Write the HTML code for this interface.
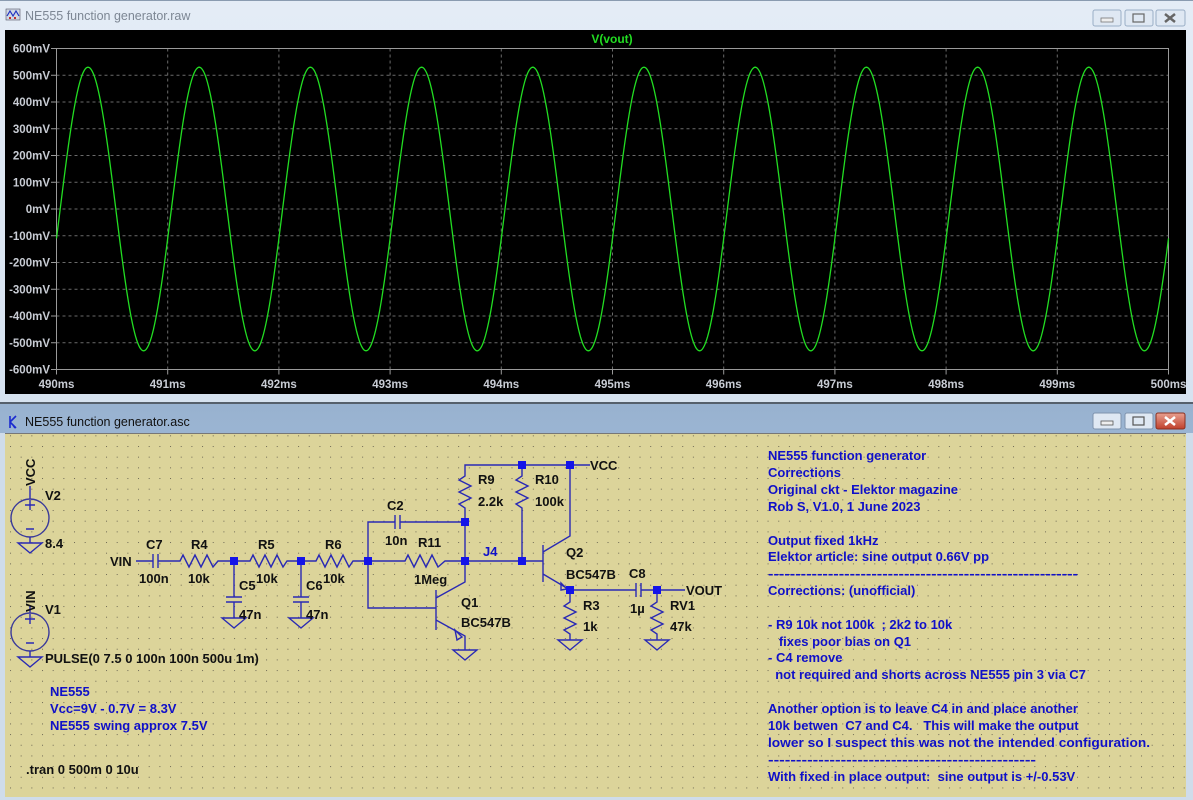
<!DOCTYPE html>
<html><head><meta charset="utf-8"><style>
html,body{margin:0;padding:0;background:#dfe8f3;width:1193px;height:800px;overflow:hidden}
svg{display:block}
text{white-space:pre}
.t{font-family:"Liberation Sans",sans-serif;font-weight:bold;font-size:13px}
.ax{font-family:"Liberation Sans",sans-serif;font-weight:bold;font-size:11.5px;fill:#c8ccd4}
.bl{fill:#1010c8}
.k{fill:#111}
</style></head><body>
<svg id="s" width="1193" height="800" xmlns="http://www.w3.org/2000/svg" xml:space="preserve">
<defs>
<linearGradient id="tb1" x1="0" y1="0" x2="0" y2="1"><stop offset="0" stop-color="#e4ecf6"/><stop offset="1" stop-color="#d6e2f0"/></linearGradient>
<linearGradient id="tb2" x1="0" y1="0" x2="0" y2="1"><stop offset="0" stop-color="#98b2d0"/><stop offset="1" stop-color="#bcd2ea"/></linearGradient>
<linearGradient id="cl" x1="0" y1="0" x2="0" y2="1"><stop offset="0" stop-color="#e8a090"/><stop offset="1" stop-color="#c0402c"/></linearGradient>
<pattern id="dots" x="10" y="446" width="10.67" height="10.67" patternUnits="userSpaceOnUse"><rect x="0" y="0" width="1" height="1" fill="#6f6a55"/></pattern>
</defs>
<rect x="0" y="0" width="1193" height="402" fill="url(#tb1)"/>
<rect x="0" y="0" width="1193" height="1" fill="#8a9bb0"/>
<g transform="translate(6,7)"><rect x="0" y="2" width="14" height="11" fill="#d0d8e4" stroke="#556" stroke-width="0.6"/><path d="M1 9 L4 4 L7 9 L10 4 L13 9" stroke="#2030c0" fill="none" stroke-width="1.2"/><rect x="3" y="10" width="2" height="2" fill="#c03030"/><rect x="8" y="10" width="2" height="2" fill="#c03030"/></g>
<text x="25" y="20" font-family="Liberation Sans,sans-serif" font-size="12.5" fill="#7d8794">NE555 function generator.raw</text>
<g fill="#dfe8f3" stroke="#9aaec6"><rect x="1093" y="10" width="28" height="16" rx="2"/><rect x="1125" y="10" width="28" height="16" rx="2"/><rect x="1156" y="10" width="29" height="16" rx="2"/></g>
<rect x="1101" y="18" width="12" height="4" fill="#eee" stroke="#777" stroke-width="0.8"/>
<rect x="1133" y="14" width="11" height="8" fill="none" stroke="#666" stroke-width="1.2"/>
<path d="M1165 14 L1175 22 M1175 14 L1165 22" stroke="#666" stroke-width="2.5"/>
<rect x="5" y="30" width="1181" height="364" fill="#000"/>
<g id="grid" stroke="#6a6a6a" stroke-dasharray="3,3" stroke-width="1"></g>
<rect x="56.5" y="48.5" width="1112" height="321" fill="none" stroke="#9a9a9a"/>
<path id="sine" fill="none" stroke="#22dd22" stroke-width="1.3"/>
<text x="612" y="43" text-anchor="middle" font-family="Liberation Sans,sans-serif" font-weight="bold" font-size="12" fill="#22dd22">V(vout)</text>
<g id="labels"></g>
<rect x="0" y="402" width="1193" height="2" fill="#55606c"/>
<rect x="0" y="404" width="1193" height="396" fill="url(#tb2)"/>
<rect x="0" y="433" width="1193" height="367" fill="#cfdcea"/>
<path d="M10 416 L10 428 M10 422 L16 416 M10 422 L16 428 M13 425 L15 428" stroke="#1a2ad0" stroke-width="1.6" fill="none"/>
<text x="25" y="426" font-family="Liberation Sans,sans-serif" font-size="12.5" fill="#111">NE555 function generator.asc</text>
<g fill="#dfe8f3" stroke="#7f93ad"><rect x="1093" y="413" width="28" height="16" rx="2"/><rect x="1125" y="413" width="28" height="16" rx="2"/></g>
<rect x="1156" y="413" width="29" height="16" rx="2" fill="url(#cl)" stroke="#8a3020"/>
<rect x="1101" y="421" width="12" height="4" fill="#eee" stroke="#555" stroke-width="0.8"/>
<rect x="1133" y="417" width="11" height="8" fill="none" stroke="#555" stroke-width="1.2"/>
<path d="M1165 417 L1175 425 M1175 417 L1165 425" stroke="#fff" stroke-width="2.5"/>
<rect x="5" y="433" width="1181" height="364" fill="#dcd49a"/>
<rect x="5" y="433" width="1181" height="364" fill="url(#dots)"/>
<rect x="5" y="433" width="1181" height="1" fill="#777"/>
<g stroke="#2a2ab4" stroke-width="1.4" fill="none">
<path d="M30 486 V499"/><circle cx="30" cy="518" r="19" stroke="#3a3a9a"/><path d="M25 505 H35 M30 500 V510 M26 529 H34"/><path d="M30 537 V543"/><path d="M18 543 H42 L30 553 Z"/>
<path d="M30 606 V613"/><circle cx="30" cy="632" r="19" stroke="#3a3a9a"/><path d="M25 619 H35 M30 614 V624 M26 643 H34"/><path d="M30 651 V657"/><path d="M18 657 H42 L30 667 Z"/>
<path d="M136 561 H153 M153 554 V568 M158 554 V568 M158 561 H180 L183 555 L189 567 L195 555 L201 567 L207 555 L213 567 L218 561 H250 L253 555 L259 567 L265 555 L271 567 L277 555 L283 567 L287 561 H316 L319 555 L325 567 L331 555 L337 567 L343 555 L349 567 L353 561 H405 L408 555 L414 567 L420 555 L426 567 L432 555 L438 567 L445 561 H543"/>
<path d="M234 561 V597 M226 597 H242 M226 602 H242 M234 602 V618 M222 618 H246 L234 628 Z"/>
<path d="M301 561 V597 M293 597 H309 M293 602 H309 M301 602 V618 M289 618 H313 L301 628 Z"/>
<path d="M368 561 V522 H395 M395 515 V529 M400 515 V529 M400 522 H465"/>
<path d="M368 561 V608 H436 M436 590 V630 M436 598 L465 582 V561 M436 620 L465 636 V650 M453 650 H477 L465 660 Z"/>
<path d="M455 630 L462 637 L457 640 Z" />
<path d="M465 561 V522 V508 L459 504 L471 498 L459 492 L471 486 L459 480 L465 476 V465 H570"/>
<path d="M522 561 V508 L516 504 L528 498 L516 492 L528 486 L516 480 L522 476 V465"/>
<path d="M570 465 H590"/>
<path d="M543 545 V582 M543 552 L570 536 V465 M543 574 L570 590"/>
<path d="M561 583 L567 589 L561 590 Z"/>
<path d="M570 590 H636 M636 583 V597 M641 583 V597 M641 590 H685"/>
<path d="M570 590 V602 L564 606 L576 612 L564 618 L576 624 L564 630 L570 634 V640 M558 640 H582 L570 650 Z"/>
<path d="M657 590 V602 L651 606 L663 612 L651 618 L663 624 L651 630 L657 634 V640 M645 640 H669 L657 650 Z"/>
</g>
<g fill="#1414e8">
<rect x="230" y="557" width="8" height="8"/><rect x="297" y="557" width="8" height="8"/><rect x="364" y="557" width="8" height="8"/>
<rect x="461" y="518" width="8" height="8"/><rect x="461" y="557" width="8" height="8"/><rect x="518" y="557" width="8" height="8"/>
<rect x="518" y="461" width="8" height="8"/><rect x="566" y="461" width="8" height="8"/><rect x="566" y="586" width="8" height="8"/><rect x="653" y="586" width="8" height="8"/>
</g>
<g class="t k">
<text transform="translate(35,486) rotate(-90)">VCC</text>
<text transform="translate(35,612) rotate(-90)">VIN</text>
<text x="45" y="500">V2</text><text x="45" y="548">8.4</text>
<text x="45" y="614">V1</text><text x="45" y="663">PULSE(0 7.5 0 100n 100n 500u 1m)</text>
<text x="110" y="566">VIN</text>
<text x="146" y="549">C7</text><text x="139" y="583">100n</text>
<text x="191" y="549">R4</text><text x="188" y="583">10k</text>
<text x="258" y="549">R5</text><text x="256" y="583">10k</text>
<text x="239" y="590">C5</text><text x="239" y="619">47n</text>
<text x="325" y="549">R6</text><text x="323" y="583">10k</text>
<text x="306" y="590">C6</text><text x="306" y="619">47n</text>
<text x="387" y="510">C2</text><text x="385" y="545">10n</text>
<text x="418" y="547">R11</text><text x="414" y="584">1Meg</text>
<text x="461" y="607">Q1</text><text x="461" y="627">BC547B</text>
<text x="478" y="484">R9</text><text x="478" y="506">2.2k</text>
<text x="535" y="484">R10</text><text x="535" y="506">100k</text>
<text x="590" y="470">VCC</text>
<text x="566" y="557">Q2</text><text x="566" y="579">BC547B</text>
<text x="629" y="578">C8</text><text x="630" y="613">1µ</text>
<text x="686" y="595">VOUT</text>
<text x="583" y="610">R3</text><text x="583" y="631">1k</text>
<text x="670" y="610">RV1</text><text x="670" y="631">47k</text>
<text x="26" y="774">.tran 0 500m 0 10u</text>
</g>
<text class="t bl" x="483" y="556">J4</text>
<g class="t bl">
<text x="50" y="696">NE555</text><text x="50" y="713">Vcc=9V - 0.7V = 8.3V</text><text x="50" y="730">NE555 swing approx 7.5V</text>
<text x="768" y="460">NE555 function generator</text>
<text x="768" y="477">Corrections</text>
<text x="768" y="494">Original ckt - Elektor magazine</text>
<text x="768" y="511">Rob S, V1.0, 1 June 2023</text>
<text x="768" y="545">Output fixed 1kHz</text>
<text x="768" y="561">Elektor article: sine output 0.66V pp</text>
<text x="768" y="578" textLength="310" lengthAdjust="spacingAndGlyphs">---------------------------------------------------------</text>
<text x="768" y="595">Corrections: (unofficial)</text>
<text x="768" y="629">- R9 10k not 100k  ; 2k2 to 10k</text>
<text x="768" y="646">   fixes poor bias on Q1</text>
<text x="768" y="662">- C4 remove</text>
<text x="768" y="679">  not required and shorts across NE555 pin 3 via C7</text>
<text x="768" y="713">Another option is to leave C4 in and place another</text>
<text x="768" y="730">10k betwen  C7 and C4.   This will make the output</text>
<text x="768" y="747" textLength="382" lengthAdjust="spacingAndGlyphs">lower so I suspect this was not the intended configuration.</text>
<text x="768" y="764" textLength="268" lengthAdjust="spacingAndGlyphs">------------------------------------------------</text>
<text x="768" y="781">With fixed in place output:  sine output is +/-0.53V</text>
</g>
</svg>
<script>
(function(){
var NS="http://www.w3.org/2000/svg";
var x0=56.5,x1=1168.5,y0=48.5,y1=369.5;
var g=document.getElementById('grid'),lab=document.getElementById('labels');
function el(t,a,p,txt){var e=document.createElementNS(NS,t);for(var k in a)e.setAttribute(k,a[k]);if(txt)e.textContent=txt;p.appendChild(e);return e;}
for(var i=1;i<12;i++){var y=y0+(y1-y0)*i/12;el('line',{x1:x0,x2:x1,y1:y,y2:y},g);}
for(var i=1;i<10;i++){var x=x0+(x1-x0)*i/10;el('line',{x1:x,x2:x,y1:y0,y2:y1},g);}
var vl=['600mV','500mV','400mV','300mV','200mV','100mV','0mV','-100mV','-200mV','-300mV','-400mV','-500mV','-600mV'];
for(var i=0;i<=12;i++){var y=y0+(y1-y0)*i/12;el('text',{x:50,y:y+4,'text-anchor':'end','class':'ax'},lab,vl[i]);el('line',{x1:51,x2:x0,y1:y,y2:y,stroke:'#9a9a9a'},lab);}
for(var i=0;i<=10;i++){var x=x0+(x1-x0)*i/10;el('text',{x:x,y:388,'text-anchor':'middle','class':'ax'},lab,(490+i)+'ms');el('line',{x1:x,x2:x,y1:y1,y2:y1+5,stroke:'#9a9a9a'},lab);}
var d='',per=(x1-x0)/10,amp=0.53*(y1-y0)/1.2,ym=(y0+y1)/2;
for(var x=x0;x<=x1;x+=1){var v=Math.cos(2*Math.PI*(x-88)/per);d+=(x==x0?'M':'L')+x.toFixed(1)+' '+(ym-amp*v).toFixed(1);}
document.getElementById('sine').setAttribute('d',d);
})();
</script>
</body></html>
